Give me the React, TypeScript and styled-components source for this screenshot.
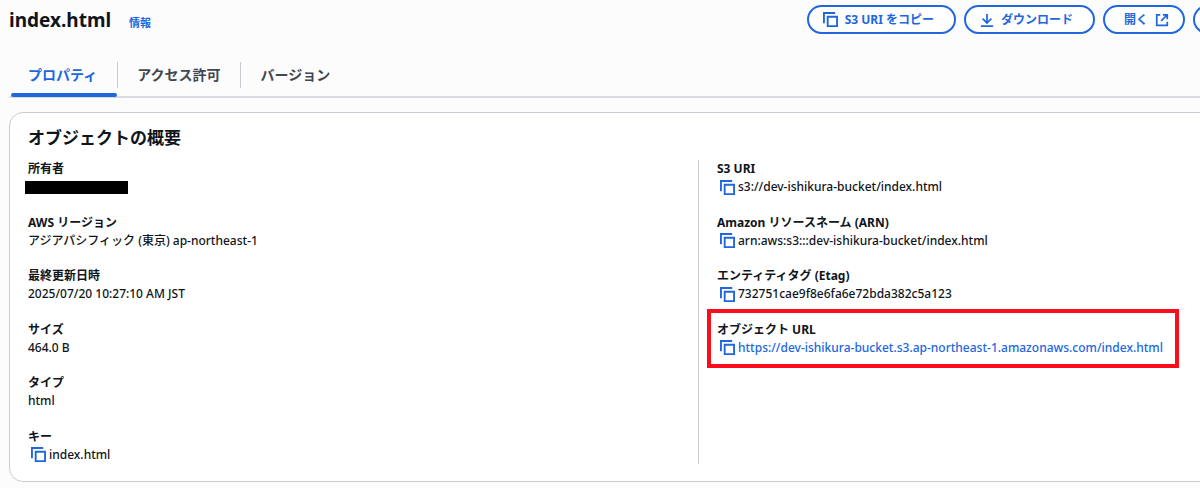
import React from "react";
import styled, { createGlobalStyle, css } from "styled-components";

const blue = "#2067df";
const ink = "#10151c";
const line = "#c8cbd2";

const GlobalStyle = createGlobalStyle`
  * { box-sizing: border-box; }
  body {
    margin: 0;
    background: #fcfcfd;
    color: ${ink};
    font-family: "Noto Sans", "Noto Sans CJK JP", sans-serif;
    font-size: 12px;
    line-height: 18px;
  }
`;

const Viewport = styled.div`
  overflow-x: clip;
`;

/* The console body is wider than the viewport and runs off to the right. */
const Page = styled.div`
  width: calc(100% + 196px);
  padding: 5px 9px 6px;
`;

const Header = styled.header`
  display: flex;
  align-items: flex-start;
  justify-content: space-between;
`;

const Heading = styled.div`
  display: flex;
  align-items: baseline;
  gap: 18px;
`;

const Title = styled.h1`
  margin: 0;
  font-size: 19px;
  line-height: 30px;
  font-weight: 700;
`;

const InfoLink = styled.a`
  color: ${blue};
  font-size: 11px;
  font-weight: 700;
  text-decoration: none;
`;

const Actions = styled.div`
  display: flex;
  gap: 8px;
`;

const ActionButton = styled.button<{ $wide?: boolean; $trailingIcon?: boolean }>`
  display: inline-flex;
  align-items: center;
  gap: 7px;
  height: 29px;
  padding: ${(p) => (p.$trailingIcon ? "0 14px 0 19px" : "0 20px 0 14px")};
  border: 2px solid ${blue};
  border-radius: 15px;
  background: #fff;
  color: ${blue};
  font: inherit;
  font-weight: 700;
  white-space: nowrap;
  ${(p) => p.$wide && css`width: 194px;`}
`;

const Tabs = styled.nav`
  display: flex;
  margin-top: 27px;
  padding-bottom: 8px;
  border-bottom: 2px solid #dadbe2;
`;

const Tab = styled.button<{ $active?: boolean }>`
  position: relative;
  height: 26px;
  padding: 0 20px 0 19px;
  border: 0;
  background: none;
  color: ${(p) => (p.$active ? blue : "#424650")};
  font: inherit;
  font-size: 14px;
  font-weight: 700;

  & + & {
    border-left: 1px solid ${line};
  }

  ${(p) =>
    p.$active &&
    css`
      &::after {
        content: "";
        position: absolute;
        left: 2px;
        right: 0;
        bottom: -9px;
        height: 4px;
        border-radius: 2px;
        background: ${blue};
      }
    `}
`;

const Card = styled.section`
  margin-top: 14px;
  padding: 14px 18px 17px;
  border: 1px solid ${line};
  border-radius: 14px;
  background: #fff;
`;

const CardTitle = styled.h2`
  margin: 0 0 11px;
  font-size: 17px;
  line-height: 22px;
  font-weight: 700;
`;

const Columns = styled.div`
  display: grid;
  grid-template-columns: 1fr 1fr;
`;

const Details = styled.dl<{ $divided?: boolean }>`
  display: grid;
  grid-template-rows: repeat(6, 36px);
  align-content: space-between;
  justify-items: start;
  min-height: 304px;
  margin: 0;
  ${(p) =>
    p.$divided &&
    css`
      padding-left: 18px;
      border-left: 1px solid ${line};
    `}
`;

const Field = styled.div<{ $highlighted?: boolean }>`
  position: relative;
  ${(p) =>
    p.$highlighted &&
    css`
      &::after {
        content: "";
        position: absolute;
        inset: -12px -16px -11px -10px;
        border: 4px solid #fb0d1b;
        pointer-events: none;
      }
    `}
`;

const Label = styled.dt`
  font-weight: 700;
`;

const Value = styled.dd`
  display: flex;
  align-items: center;
  height: 18px;
  margin: 0;
  font-weight: 500;
  white-space: nowrap;
`;

const Redaction = styled.span`
  width: 103px;
  height: 13px;
  margin-left: -3px;
  background: #000;
`;

const CopyButton = styled.button`
  display: inline-flex;
  margin: 0 3px;
  padding: 0;
  border: 0;
  background: none;
  color: ${blue};
`;

const ObjectLink = styled.a`
  color: ${blue};
  text-decoration: none;
`;

const Svg = styled.svg`
  flex: none;
  fill: none;
  stroke: currentColor;
  stroke-width: 2;
`;

const CopyIcon = () => (
  <Svg width="15" height="15" viewBox="0 0 16 16" aria-hidden="true">
    <path d="M15 5H5v10h10V5Z" />
    <path d="M13 1H1v11" />
  </Svg>
);

const DownloadIcon = () => (
  <Svg width="14" height="14" viewBox="0 0 16 16" aria-hidden="true">
    <path d="M1 15h14M8 1v10M3 6.5l5 5 5-5" />
  </Svg>
);

const ExternalIcon = () => (
  <Svg width="14" height="14" viewBox="0 0 16 16" aria-hidden="true">
    <path d="M6 2H2v12h12v-4M9 2h5v5M14 2L7 9" />
  </Svg>
);

type FieldData = {
  label: string;
  value?: string;
  copy?: boolean;
  href?: string;
};

const leftFields: FieldData[] = [
  { label: "所有者" },
  { label: "AWS リージョン", value: "アジアパシフィック (東京) ap-northeast-1" },
  { label: "最終更新日時", value: "2025/07/20 10:27:10 AM JST" },
  { label: "サイズ", value: "464.0 B" },
  { label: "タイプ", value: "html" },
  { label: "キー", value: "index.html", copy: true },
];

const rightFields: FieldData[] = [
  { label: "S3 URI", value: "s3://dev-ishikura-bucket/index.html", copy: true },
  {
    label: "Amazon リソースネーム (ARN)",
    value: "arn:aws:s3:::dev-ishikura-bucket/index.html",
    copy: true,
  },
  { label: "エンティティタグ (Etag)", value: "732751cae9f8e6fa6e72bda382c5a123", copy: true },
  {
    label: "オブジェクト URL",
    value: "https://dev-ishikura-bucket.s3.ap-northeast-1.amazonaws.com/index.html",
    href: "https://dev-ishikura-bucket.s3.ap-northeast-1.amazonaws.com/index.html",
    copy: true,
  },
];

const DetailField = ({ label, value, copy, href }: FieldData) => (
  <Field $highlighted={Boolean(href)}>
    <Label>{label}</Label>
    <Value>
      {copy && (
        <CopyButton type="button" aria-label={`${label} をコピー`}>
          <CopyIcon />
        </CopyButton>
      )}
      {!value && <Redaction />}
      {href ? <ObjectLink href={href}>{value}</ObjectLink> : value}
    </Value>
  </Field>
);

export default function App() {
  return (
    <Viewport>
      <GlobalStyle />
      <Page>
        <Header>
          <Heading>
            <Title>index.html</Title>
            <InfoLink href="#info">情報</InfoLink>
          </Heading>
          <Actions>
            <ActionButton type="button">
              <CopyIcon />
              S3 URI をコピー
            </ActionButton>
            <ActionButton type="button">
              <DownloadIcon />
              ダウンロード
            </ActionButton>
            <ActionButton type="button" $trailingIcon>
              開く
              <ExternalIcon />
            </ActionButton>
            <ActionButton type="button" $wide aria-label="オブジェクトアクション" />
          </Actions>
        </Header>
        <Tabs>
          <Tab type="button" $active>
            プロパティ
          </Tab>
          <Tab type="button">アクセス許可</Tab>
          <Tab type="button">バージョン</Tab>
        </Tabs>
        <Card>
          <CardTitle>オブジェクトの概要</CardTitle>
          <Columns>
            <Details>
              {leftFields.map((f) => (
                <DetailField key={f.label} {...f} />
              ))}
            </Details>
            <Details $divided>
              {rightFields.map((f) => (
                <DetailField key={f.label} {...f} />
              ))}
            </Details>
          </Columns>
        </Card>
      </Page>
    </Viewport>
  );
}
